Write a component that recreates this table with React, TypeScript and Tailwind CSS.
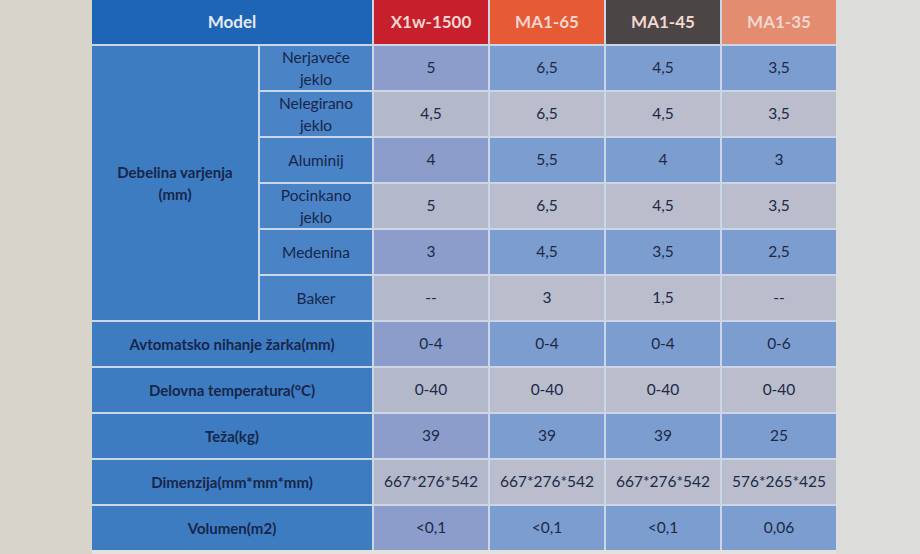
const models = [
  { name: 'X1w-1500', bg: 'bg-[#c71f2b]' },
  { name: 'MA1-65', bg: 'bg-[#e65a34]' },
  { name: 'MA1-45', bg: 'bg-[#4b4546]' },
  { name: 'MA1-35', bg: 'bg-[#e38c70]' },
]

const thickness = [
  { label: ['Nerjaveče', 'jeklo'], values: ['5', '6,5', '4,5', '3,5'] },
  { label: ['Nelegirano', 'jeklo'], values: ['4,5', '6,5', '4,5', '3,5'] },
  { label: ['Aluminij'], values: ['4', '5,5', '4', '3'] },
  { label: ['Pocinkano', 'jeklo'], values: ['5', '6,5', '4,5', '3,5'] },
  { label: ['Medenina'], values: ['3', '4,5', '3,5', '2,5'] },
  { label: ['Baker'], values: ['--', '3', '1,5', '--'] },
]

const specs = [
  { label: 'Avtomatsko nihanje žarka(mm)', values: ['0-4', '0-4', '0-4', '0-6'] },
  { label: 'Delovna temperatura(°C)', values: ['0-40', '0-40', '0-40', '0-40'] },
  { label: 'Teža(kg)', values: ['39', '39', '39', '25'] },
  { label: 'Dimenzija(mm*mm*mm)', values: ['667*276*542', '667*276*542', '667*276*542', '576*265*425'] },
  { label: 'Volumen(m2)', values: ['<0,1', '<0,1', '<0,1', '0,06'] },
]

function DataCells({ values, blue }: { values: string[]; blue: boolean }) {
  return (
    <>
      {values.map((v, i) => (
        <div
          key={i}
          className={`flex items-center justify-center text-[15.5px] text-[#1d2946] ${
            blue ? (i === 0 ? 'bg-[#8a9dcb]' : 'bg-[#7c9dcf]') : i === 0 ? 'bg-[#b4b8cb]' : 'bg-[#b9bdcc]'
          }`}
        >
          {v}
        </div>
      ))}
    </>
  )
}

export default function App() {
  return (
    <div className="flex h-[554px] w-[920px] overflow-hidden bg-[#dcdcdb] font-['Lato',sans-serif]">
      <div className="w-[92px] bg-[#d8d4cb]" />
      <div className="flex flex-col">
        <div className="grid grid-cols-[166px_112px_114px_114px_114px_114px] grid-rows-[44px_repeat(11,44px)] gap-[2px] bg-[#cdd6e6]">
          {/* header */}
          <div className="col-span-2 flex items-center justify-center bg-[#1f65b5] text-[17px] font-bold text-[#e3e9f3]">
            Model
          </div>
          {models.map((m) => (
            <div
              key={m.name}
              className={`flex items-center justify-center text-[17px] font-bold text-[#f3d6d0] ${m.bg}`}
            >
              {m.name}
            </div>
          ))}

          {/* welding thickness */}
          <div className="row-span-6 flex flex-col items-center justify-center bg-[#3e7cc1] text-[15px] font-bold leading-[22px] text-[#17264a]">
            <span>Debelina varjenja</span>
            <span>(mm)</span>
          </div>
          {thickness.map((row, r) => (
            <div key={r} className="contents">
              <div className="flex flex-col items-center justify-center bg-[#4a83c6] text-[15.5px] leading-[22px] text-[#17264a]">
                {row.label.map((l) => (
                  <span key={l}>{l}</span>
                ))}
              </div>
              <DataCells values={row.values} blue={r % 2 === 0} />
            </div>
          ))}

          {/* other specs */}
          {specs.map((row, r) => (
            <div key={row.label} className="contents">
              <div className="col-span-2 flex items-center justify-center bg-[#3e7cc1] text-[15px] font-bold text-[#17264a]">
                {row.label}
              </div>
              <DataCells values={row.values} blue={r % 2 === 0} />
            </div>
          ))}
        </div>
        <div className="flex-1 bg-[#e2e1dc]" />
      </div>
      <div className="flex-1 bg-[#dcdcdb]" />
    </div>
  )
}
